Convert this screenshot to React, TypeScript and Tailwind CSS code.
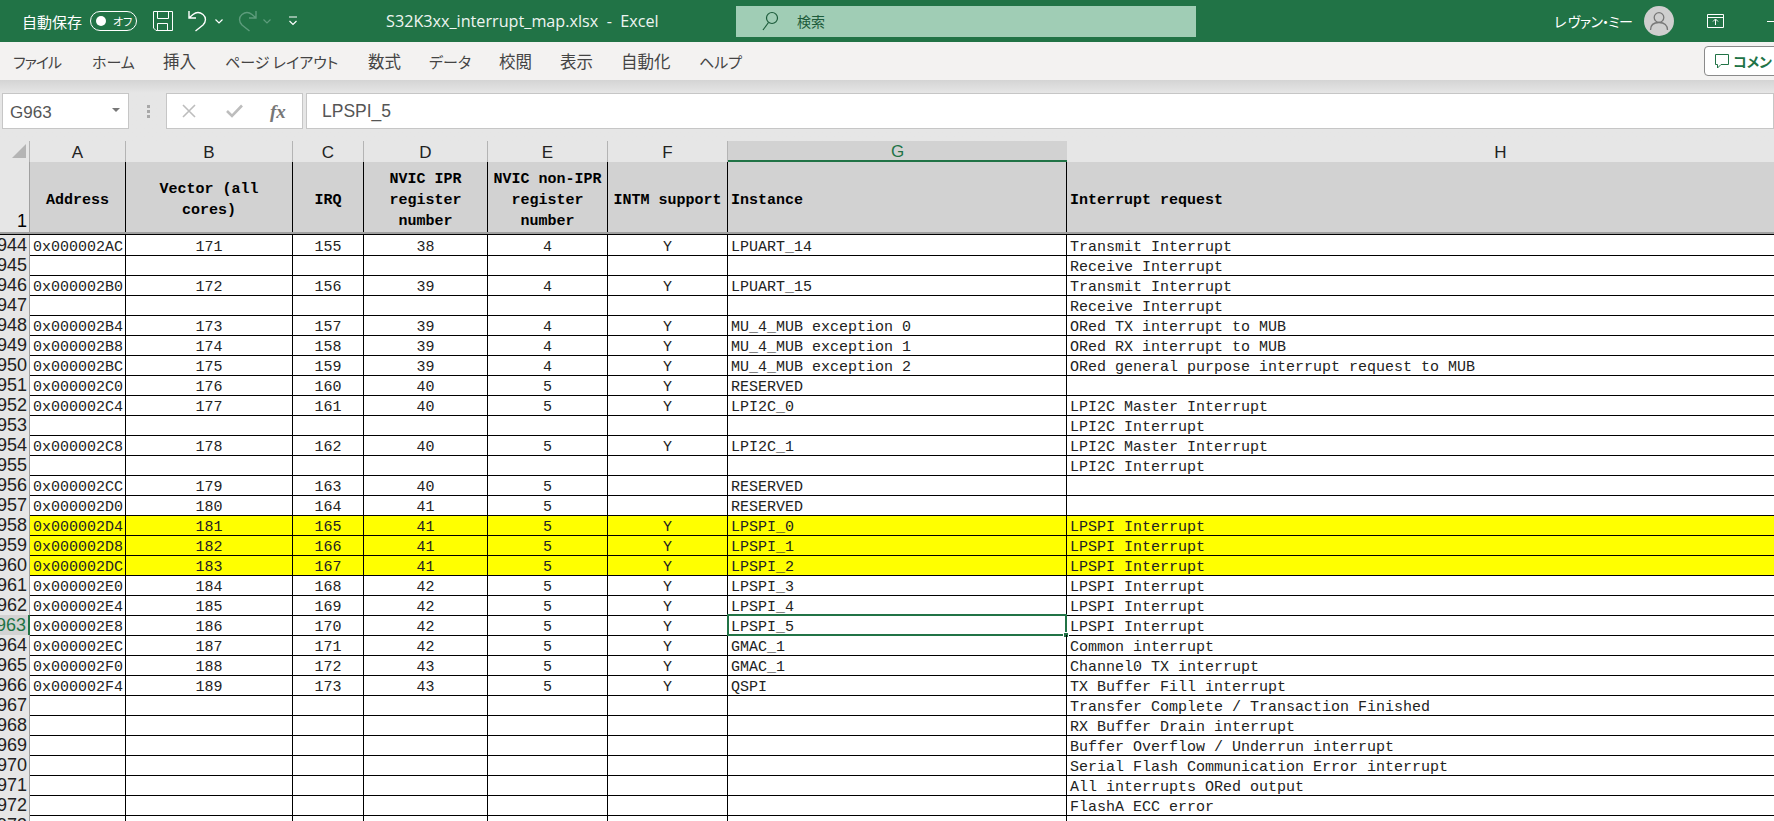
const JP = "font-['Noto_Sans_CJK_JP','Noto_Sans',sans-serif]";

const rows: [number, string, string, string, string, string, string, string, string][] = [
	[944, "0x000002AC", "171", "155", "38", "4", "Y", "LPUART_14", "Transmit Interrupt"],
	[945, "", "", "", "", "", "", "", "Receive Interrupt"],
	[946, "0x000002B0", "172", "156", "39", "4", "Y", "LPUART_15", "Transmit Interrupt"],
	[947, "", "", "", "", "", "", "", "Receive Interrupt"],
	[948, "0x000002B4", "173", "157", "39", "4", "Y", "MU_4_MUB exception 0", "ORed TX interrupt to MUB"],
	[949, "0x000002B8", "174", "158", "39", "4", "Y", "MU_4_MUB exception 1", "ORed RX interrupt to MUB"],
	[950, "0x000002BC", "175", "159", "39", "4", "Y", "MU_4_MUB exception 2", "ORed general purpose interrupt request to MUB"],
	[951, "0x000002C0", "176", "160", "40", "5", "Y", "RESERVED", ""],
	[952, "0x000002C4", "177", "161", "40", "5", "Y", "LPI2C_0", "LPI2C Master Interrupt"],
	[953, "", "", "", "", "", "", "", "LPI2C Interrupt"],
	[954, "0x000002C8", "178", "162", "40", "5", "Y", "LPI2C_1", "LPI2C Master Interrupt"],
	[955, "", "", "", "", "", "", "", "LPI2C Interrupt"],
	[956, "0x000002CC", "179", "163", "40", "5", "", "RESERVED", ""],
	[957, "0x000002D0", "180", "164", "41", "5", "", "RESERVED", ""],
	[958, "0x000002D4", "181", "165", "41", "5", "Y", "LPSPI_0", "LPSPI Interrupt"],
	[959, "0x000002D8", "182", "166", "41", "5", "Y", "LPSPI_1", "LPSPI Interrupt"],
	[960, "0x000002DC", "183", "167", "41", "5", "Y", "LPSPI_2", "LPSPI Interrupt"],
	[961, "0x000002E0", "184", "168", "42", "5", "Y", "LPSPI_3", "LPSPI Interrupt"],
	[962, "0x000002E4", "185", "169", "42", "5", "Y", "LPSPI_4", "LPSPI Interrupt"],
	[963, "0x000002E8", "186", "170", "42", "5", "Y", "LPSPI_5", "LPSPI Interrupt"],
	[964, "0x000002EC", "187", "171", "42", "5", "Y", "GMAC_1", "Common interrupt"],
	[965, "0x000002F0", "188", "172", "43", "5", "Y", "GMAC_1", "Channel0 TX interrupt"],
	[966, "0x000002F4", "189", "173", "43", "5", "Y", "QSPI", "TX Buffer Fill interrupt"],
	[967, "", "", "", "", "", "", "", "Transfer Complete / Transaction Finished"],
	[968, "", "", "", "", "", "", "", "RX Buffer Drain interrupt"],
	[969, "", "", "", "", "", "", "", "Buffer Overflow / Underrun interrupt"],
	[970, "", "", "", "", "", "", "", "Serial Flash Communication Error interrupt"],
	[971, "", "", "", "", "", "", "", "All interrupts ORed output"],
	[972, "", "", "", "", "", "", "", "FlashA ECC error"],
	[973, "", "", "", "", "", "", "", ""],
];

const menu = [
	{ label: "ファイル", cls: "w-[79px] text-[15px] tracking-[-1px]" },
	{ label: "ホーム", cls: "w-[71px] text-[15px]" },
	{ label: "挿入", cls: "w-[62px] text-[16.5px]" },
	{ label: "ページ レイアウト", cls: "w-[143px] text-[15px]" },
	{ label: "数式", cls: "w-[61px] text-[16.5px]" },
	{ label: "データ", cls: "w-[70px] text-[15px]" },
	{ label: "校閲", cls: "w-[61px] text-[16.5px]" },
	{ label: "表示", cls: "w-[61px] text-[16.5px]" },
	{ label: "自動化", cls: "w-[78px] text-[16.5px]" },
	{ label: "ヘルプ", cls: "w-[50px] text-[15px]" },
];
const columns = ["A", "B", "C", "D", "E", "F", "G", "H"];
const gridCols = "grid grid-cols-[30px_96px_167px_71px_124px_120px_120px_339px_868px]";

const TitleBar = () => (
	<div className={`flex h-[42px] shrink-0 items-center bg-[#217346] pl-[22px] text-white ${JP}`}>
		<span className="w-[60px] shrink-0 text-[15px] leading-none">自動保存</span>
		<div className="ml-[8px] flex h-[20px] w-[47px] shrink-0 items-center rounded-full border border-white pl-[5px]">
			<span className="h-[10px] w-[10px] shrink-0 rounded-full bg-white" />
			<span className="ml-[7px] whitespace-nowrap text-[11px] leading-none [font-feature-settings:'palt']">オフ</span>
		</div>
		<svg className="ml-[16px] shrink-0" width="20" height="20" viewBox="0 0 20 20" fill="none" stroke="white">
			<path d="M.5.5h19v19H3L.5 17z" />
			<path d="M4.5.5v7h11v-7M4.5 19.5v-7h10v7" />
		</svg>
		<svg className="ml-[15px] shrink-0" width="20" height="22" viewBox="0 0 20 22" fill="none" stroke="white" strokeWidth="1.4">
			<path d="M1 1v7h7M1.500 7.500L5 4.500c3-2.500 7-2.500 10 0 3.500 3 3 7.500 0 10.500L7.500 21" />
		</svg>
		<svg className="ml-[7px] shrink-0" width="8" height="5" viewBox="0 0 8 5" fill="none" stroke="white" strokeWidth="1.2">
			<path d="M.5.5L4 4 7.500.5" />
		</svg>
		<svg className="ml-[14px] shrink-0" width="20" height="22" viewBox="0 0 20 22" fill="none" stroke="#5d9c7c" strokeWidth="1.4">
			<path d="M19 1v7h-7M18.500 7.500L15 4.500c-3-2.500-7-2.500-10 0-3.500 3-3 7.500 0 10.500L12.500 21" />
		</svg>
		<svg className="ml-[6px] shrink-0" width="8" height="5" viewBox="0 0 8 5" fill="none" stroke="#5d9c7c" strokeWidth="1.2">
			<path d="M.5.5L4 4 7.500.5" />
		</svg>
		<svg className="ml-[17px] shrink-0" width="10" height="10" viewBox="0 0 10 10" fill="none" stroke="white" strokeWidth="1.200">
			<path d="M1 1h8M1.500 5L5 8.500 8.500 5" />
		</svg>
		<span className="ml-[88px] w-[274px] shrink-0 whitespace-pre font-['Open_Sans',sans-serif] text-[16.200px] text-[#eef5f1]">S32K3xx_interrupt_map.xlsx  -  Excel</span>
		<div className="ml-[76px] flex h-[31px] w-[460px] shrink-0 items-center bg-[#a0cdb5] pl-[25px] text-[#1d5c3b]">
			<svg width="18" height="20" viewBox="0 0 18 20" fill="none" stroke="#1d5c3b" strokeWidth="1.200">
				<circle cx="11" cy="7" r="5.500" />
				<path d="M7.500 11.500L2 19" />
			</svg>
			<span className="ml-[18px] text-[14px] leading-none">検索</span>
		</div>
		<span className="ml-[358px] w-[76px] shrink-0 whitespace-nowrap text-[14px] leading-none tracking-[-0.8px] [font-feature-settings:'palt']">レ ヴァン・ミー</span>
		<div className="ml-[14px] flex h-[30px] w-[30px] shrink-0 items-center justify-center rounded-full bg-[#cfcfcf]">
			<svg width="20" height="20" viewBox="0 0 20 20" fill="none" stroke="#777" strokeWidth="1.300">
				<circle cx="10" cy="6.500" r="4.800" />
				<path d="M1.500 19c0-5 3-7.500 8.500-7.500s8.500 2.500 8.500 7.500" />
			</svg>
		</div>
		<svg className="ml-[33px] shrink-0" width="17" height="14" viewBox="0 0 17 14" fill="none" stroke="white">
			<path d="M.5.500h16v13H.5zM.5 3.500h16" />
			<path d="M8.500 11V5.500M6 7.500l2.500-2.500L11 7.500" />
		</svg>
		<span className="ml-[43px] h-px w-[14px] shrink-0 bg-white" />
	</div>
);

const MenuBar = () => (
	<div className={`flex h-[38px] shrink-0 items-center bg-[#f3f2f1] pl-[13px] ${JP}`}>
		<div className="flex items-center leading-none text-[#444] [font-feature-settings:'palt']">
			{menu.map((m) => (
				<span className={`whitespace-nowrap ${m.cls}`} key={m.label}>
					{m.label}
				</span>
			))}
		</div>
		<div className="ml-auto flex h-[30px] w-[90px] shrink-0 translate-x-[20px] items-center rounded-[4px] border border-[#8a8a8a] bg-white pl-[10px]">
			<svg className="shrink-0" width="15" height="15" viewBox="0 0 15 15" fill="none" stroke="#217346">
				<path d="M.5.500h13v10H6L2.500 14v-3.500h-2z" />
			</svg>
			<span className="ml-[3px] whitespace-nowrap text-[14px] font-bold text-[#217346] [font-feature-settings:'palt']">コメント</span>
		</div>
	</div>
);

const FormulaBar = () => (
	<div className="flex h-[61px] shrink-0 flex-col bg-[#e6e6e6] bg-gradient-to-b from-[#d4d4d4] to-[#e6e6e6] to-[13px] bg-no-repeat">
		<div className="mt-[13px] flex h-[36px] items-stretch pl-[2px]">
			<div className="flex w-[127px] shrink-0 items-center border border-[#c6c6c6] bg-white pl-[7px] font-['Liberation_Sans',sans-serif] text-[17px] text-[#555]">
				<span className="pt-[3px]">G963</span>
				<span className="ml-[60px] mb-[3px] h-0 w-0 border-x-[4px] border-t-[4px] border-x-transparent border-t-[#777]" />
			</div>
			<div className="flex w-[37px] shrink-0 flex-col items-center justify-center gap-[2px] pl-[1px]">
				<span className="h-[3px] w-[3px] bg-[#a8a8a8]" />
				<span className="h-[3px] w-[3px] bg-[#a8a8a8]" />
				<span className="h-[3px] w-[3px] bg-[#a8a8a8]" />
			</div>
			<div className="flex w-[137px] shrink-0 items-center border border-[#c6c6c6] bg-white pl-[15px]">
				<svg width="14" height="14" viewBox="0 0 14 14" fill="none" stroke="#bdbdbd" strokeWidth="1.600">
					<path d="M1 1l12 12M13 1L1 13" />
				</svg>
				<svg className="ml-[30px]" width="17" height="14" viewBox="0 0 17 14" fill="none" stroke="#bdbdbd" strokeWidth="2.600">
					<path d="M1 7l5 5L16 1.500" />
				</svg>
				<span className="ml-[27px] font-['Liberation_Serif',serif] text-[19px] font-bold italic leading-none text-[#777]">fx</span>
			</div>
			<div className="ml-[3px] flex flex-1 items-center border border-[#c6c6c6] bg-white pl-[15px] font-['Liberation_Sans',sans-serif] text-[17.500px] text-[#555]">
				LPSPI_5
			</div>
		</div>
	</div>
);

const Sheet = () => {
	const cell = "overflow-visible whitespace-nowrap border-r border-b border-black pt-[5px]";
	const mono = "font-['Liberation_Mono',monospace] text-[15px] leading-[15px] text-[#222]";
	return (
		<div className="flex-1 overflow-hidden bg-white">
			<div className={`${gridCols} h-[21px] bg-[#e6e6e6]`}>
				<div className="flex items-end justify-end border-r border-[#b4b4b4] pb-[4px] pr-[3px]">
					<span className="h-0 w-0 border-b-[14px] border-l-[14px] border-b-[#b4b4b4] border-l-transparent" />
				</div>
				{columns.map((c) => (
					<div
						className={`flex items-center justify-center pt-[2px] font-['Liberation_Sans',sans-serif] text-[17px] font-light leading-none ${
							c === "G"
								? "border-b-2 border-[#217346] bg-[#d2d2d2] text-[#217346]"
								: "border-r border-[#b4b4b4] text-[#222]"
						}`}
						key={c}
					>
						{c}
					</div>
				))}
			</div>
			<div className={`${gridCols} h-[72px] border-b-[2px] border-b-[#a0a0a0] bg-[#d2d2d2] font-['Liberation_Mono',monospace] text-[15px] font-bold leading-[21px] text-black`}>
				<div className="flex items-end justify-end border-r border-[#a0a0a0] bg-[#e6e6e6] pr-[2px] font-['Liberation_Sans',sans-serif] text-[18px] font-light">
					1
				</div>
				<div className="flex items-center justify-center border-r border-black pt-[6px] text-center">Address</div>
				<div className="flex items-center justify-center border-r border-black pt-[6px] text-center">
					Vector (all
					<br />
					cores)
				</div>
				<div className="flex items-center justify-center border-r border-black pt-[6px] text-center">IRQ</div>
				<div className="flex items-center justify-center border-r border-black pt-[6px] text-center">
					NVIC IPR
					<br />
					register
					<br />
					number
				</div>
				<div className="flex items-center justify-center border-r border-black pt-[6px] text-center">
					NVIC non-IPR
					<br />
					register
					<br />
					number
				</div>
				<div className="flex items-center justify-center border-r border-black pt-[6px] text-center">INTM support</div>
				<div className="flex items-center border-r border-black pl-[3px] pt-[6px]">Instance</div>
				<div className="flex items-center pl-[3px] pt-[6px]">Interrupt request</div>
			</div>
			<div className="border-t border-black">
				{rows.map(([no, addr, vec, irq, ipr, nonIpr, intm, inst, req]) => {
					const bg = no >= 958 && no <= 960 ? "bg-[#ffff00]" : "bg-white";
					const selected = no === 963;
					return (
						<div className={`${gridCols} h-[20px] ${bg} ${mono}`} key={no}>
							<div
								className={`flex items-center justify-end overflow-hidden border-r pr-[2px] font-['Liberation_Sans',sans-serif] text-[18px] font-light ${
									selected
										? "border-r-2 border-[#217346] bg-[#d2d2d2] text-[#217346]"
										: "border-[#a0a0a0] bg-[#e6e6e6] text-[#222]"
								}`}
							>
								{no}
							</div>
							<div className={`${cell} pl-[3px]`}>{addr}</div>
							<div className={`${cell} text-center`}>{vec}</div>
							<div className={`${cell} text-center`}>{irq}</div>
							<div className={`${cell} text-center`}>{ipr}</div>
							<div className={`${cell} text-center`}>{nonIpr}</div>
							<div className={`${cell} text-center`}>{intm}</div>
							<div className={`${cell} relative pl-[3px]`}>
								{inst}
								{selected && (
									<>
										<span className="absolute -left-px -top-px -bottom-[1px] -right-px border-2 border-[#217346]" />
										<span className="absolute -bottom-[3px] -right-[3px] h-[6px] w-[6px] border border-white bg-[#217346]" />
									</>
								)}
							</div>
							<div className="overflow-visible whitespace-nowrap border-b border-black pl-[3px] pt-[5px]">{req}</div>
						</div>
					);
				})}
			</div>
		</div>
	);
};

export default function App() {
	return (
		<div className="flex h-[821px] w-[1774px] flex-col overflow-hidden bg-white">
			<TitleBar />
			<MenuBar />
			<FormulaBar />
			<Sheet />
		</div>
	);
}
